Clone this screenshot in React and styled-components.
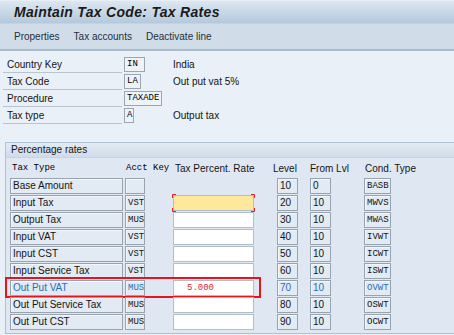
import React from "react";
import styled, { createGlobalStyle } from "styled-components";

const Global = createGlobalStyle`
  html, body { margin: 0; padding: 0; }
  body {
    background: #e9f0f7;
    font-family: "Liberation Sans", Arial, sans-serif;
    font-size: 10px;
    color: #141414;
    width: 454px;
    height: 335px;
    overflow: hidden;
  }
`;

const Page = styled.div`
  width: 454px;
  height: 335px;
  display: flex;
  flex-direction: column;
`;

const TitleBar = styled.div`
  height: 23px;
  display: flex;
  align-items: center;
  padding-left: 14px;
  background: linear-gradient(#dce7f1, #b4c9dc);
  border-top: 1px solid #e8eef4;
  box-sizing: border-box;
`;

const Title = styled.h1`
  margin: 0;
  font-family: "Liberation Sans", Arial, sans-serif;
  font-weight: bold;
  font-style: italic;
  font-size: 14px;
  letter-spacing: 0.3px;
  color: #1b1b1b;
`;

const Toolbar = styled.div`
  height: 28px;
  box-sizing: border-box;
  display: flex;
  align-items: center;
  gap: 14px;
  padding-left: 14px;
  background: #d0dde8;
  border-top: 1px solid #c3d3e2;
  border-bottom: 2px solid #a7bbcc;
`;

const ToolItem = styled.span`
  font-size: 10px;
  color: #1f2f40;
`;

const HeaderForm = styled.div`
  padding-top: 6px;
  display: flex;
  flex-direction: column;
`;

const FormRow = styled.div`
  height: 17px;
  display: grid;
  grid-template-columns: 119px 51px 1fr;
  align-items: start;
  padding-left: 3px;
`;

const Label = styled.div`
  height: 15px;
  line-height: 15px;
  padding-left: 4px;
  border-bottom: 1px solid #b8c4cf;
`;

const KeyField = styled.div`
  margin-left: 2px;
  width: ${(p) => p.$w}px;
  height: 15px;
  box-sizing: border-box;
  border: 1px solid #9aa6b2;
  background: #eef3f8;
  font-family: "Liberation Mono", "Courier New", monospace;
  font-size: 9px;
  line-height: 13px;
  padding-left: 2px;
  color: #000;
`;

const Desc = styled.div`
  height: 15px;
  line-height: 15px;
`;

const GroupBox = styled.section`
  margin-top: 17px;
  margin-left: 5px;
  border: 1px solid #aec2d5;
  border-right: none;
  background: #dfe8f2;
  padding-bottom: 2px;
`;

const GroupHeader = styled.div`
  height: 14px;
  line-height: 14px;
  padding-left: 5px;
  background: linear-gradient(#e2ebf3, #d0dce9);
  border-bottom: 1px solid #c6d4e2;
`;

const Grid = styled.div`
  display: grid;
  grid-template-columns: 115px 48px 104px 33px 54px 1fr;
  padding-left: 4px;
  position: relative;
  height: ${(p) => (p.$head ? 20 : 17)}px;
  align-items: ${(p) => (p.$head ? "center" : "start")};
`;

const MonoHead = styled.span`
  font-family: "Liberation Mono", "Courier New", monospace;
  font-size: 9px;
  padding-left: ${(p) => p.$pl || 0}px;
  color: #000;
`;

const SansHead = styled.span`
  margin-left: ${(p) => p.$ml || 0}px;
`;

const Cell = styled.div`
  width: ${(p) => p.$w}px;
  height: 16px;
  box-sizing: border-box;
  border: 1px solid #97a3ae;
  box-shadow: inset 1px 1px 0 #f3f7fb;
  background: #e2eaf3;
  padding-left: 2px;
  line-height: 14px;
  white-space: nowrap;
  overflow: hidden;
  color: ${(p) => (p.$blue ? "#2a6db3" : "#151515")};
  font-family: ${(p) =>
    p.$mono
      ? '"Liberation Mono", "Courier New", monospace'
      : '"Liberation Sans", Arial, sans-serif'};
  font-size: ${(p) => (p.$mono ? 9 : 10)}px;
`;

const Input = styled.div`
  position: relative;
  width: 81px;
  height: 16px;
  box-sizing: border-box;
  border: 1px solid #b3bec8;
  background: ${(p) => (p.$focus ? "#fde89c" : "#ffffff")};
  font-family: "Liberation Mono", "Courier New", monospace;
  font-size: 9px;
  line-height: 14px;
  color: #d8262a;
  padding-left: 13px;
`;

const FocusMarks = styled.svg`
  position: absolute;
  left: -2px;
  top: -2px;
  width: 83px;
  height: 18px;
  overflow: visible;
`;

const Highlight = styled.div`
  position: absolute;
  left: -1px;
  top: -3px;
  width: 256px;
  height: 21px;
  box-sizing: border-box;
  border: 2px solid #e8141c;
  pointer-events: none;
`;

const rows = [
  ["Base Amount", "", null, "10", "0", "BASB"],
  ["Input Tax", "VST", "", "20", "10", "MWVS", "focus"],
  ["Output Tax", "MUS", "", "30", "10", "MWAS"],
  ["Input VAT", "VST", "", "40", "10", "IVWT"],
  ["Input CST", "VST", "", "50", "10", "ICWT"],
  ["Input Service Tax", "VST", "", "60", "10", "ISWT"],
  ["Out Put VAT", "MUS", "5.000", "70", "10", "OVWT", "hl"],
  ["Out Put Service Tax", "MUS", "", "80", "10", "OSWT"],
  ["Out Put CST", "MUS", "", "90", "10", "OCWT"],
];

function Marks() {
  return (
    <FocusMarks viewBox="0 0 83 18">
      <g fill="none" stroke="#e0202a" strokeWidth="1">
        <path d="M0.5 4V0.5H4" />
        <path d="M79 0.5H82.5V4" />
        <path d="M0.5 14V17.5H4" />
        <path d="M79 17.5H82.5V14" />
      </g>
    </FocusMarks>
  );
}

export default function App() {
  return (
    <Page>
      <Global />
      <TitleBar>
        <Title>Maintain Tax Code: Tax Rates</Title>
      </TitleBar>
      <Toolbar>
        <ToolItem>Properties</ToolItem>
        <ToolItem>Tax accounts</ToolItem>
        <ToolItem>Deactivate line</ToolItem>
      </Toolbar>
      <HeaderForm>
        <FormRow>
          <Label>Country Key</Label>
          <KeyField $w={21}>IN</KeyField>
          <Desc>India</Desc>
        </FormRow>
        <FormRow>
          <Label>Tax Code</Label>
          <KeyField $w={17}>LA</KeyField>
          <Desc>Out put vat 5%</Desc>
        </FormRow>
        <FormRow>
          <Label>Procedure</Label>
          <KeyField $w={38}>TAXADE</KeyField>
          <Desc />
        </FormRow>
        <FormRow>
          <Label>Tax type</Label>
          <KeyField $w={10}>A</KeyField>
          <Desc>Output tax</Desc>
        </FormRow>
      </HeaderForm>
      <GroupBox>
        <GroupHeader>Percentage rates</GroupHeader>
        <Grid $head>
          <MonoHead $pl={2}>Tax Type</MonoHead>
          <MonoHead $pl={1}>Acct Key</MonoHead>
          <SansHead $ml={2}>Tax Percent. Rate</SansHead>
          <SansHead $ml={-4}>Level</SansHead>
          <SansHead>From Lvl</SansHead>
          <SansHead $ml={1}>Cond. Type</SansHead>
        </Grid>
        {rows.map(([name, acct, rate, lvl, from, cond, flag]) => {
          const blue = flag === "hl";
          return (
            <Grid key={name}>
              <Cell $w={113} $blue={blue}>{name}</Cell>
              <Cell $w={20} $mono $blue={blue}>{acct}</Cell>
              {rate === null ? (
                <span />
              ) : (
                <Input $focus={flag === "focus"}>
                  {rate}
                  {flag === "focus" && <Marks />}
                </Input>
              )}
              <Cell $w={21} $blue={blue}>{lvl}</Cell>
              <Cell $w={21} $blue={blue}>{from}</Cell>
              <Cell $w={27} $mono $blue={blue}>{cond}</Cell>
              {blue && <Highlight />}
            </Grid>
          );
        })}
      </GroupBox>
    </Page>
  );
}
